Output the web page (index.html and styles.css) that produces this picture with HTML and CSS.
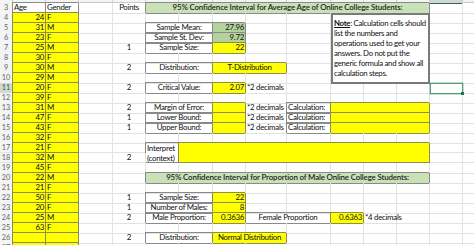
FILE: index.html
```html
<!DOCTYPE html>
<html>
<head>
<meta charset="utf-8">
<link rel="stylesheet" href="styles.css">
</head>
<body>
<div class="sheet">
  <div class="r hdr">
    <div class="corner"></div><div class="ch">A</div><div class="ch">B</div><div class="ch">C</div><div class="ch">D</div><div class="ch">E</div><div class="ch">F</div><div class="ch">G</div><div class="ch">H</div><div class="ch">I</div><div class="ch">J</div><div class="ch">K</div><div class="ch">L</div><div class="ch sel">M</div><div class="ch">N</div>
  </div>

  <div class="r"><div class="rn">3</div><div class="c b l">Age</div><div class="c b l">Gender</div><div class="c"></div><div class="c ct">Points</div><div class="c b h sp8">95% Confidence Interval for Average Age of Online College Students:</div><div class="c"></div><div class="c"></div></div>

  <div class="r"><div class="rn">4</div><div class="c b y rt">24</div><div class="c b y l">F</div><div class="c"></div><div class="c"></div><div class="c"></div><div class="c"></div><div class="c"></div><div class="c"></div><div class="c"></div><div class="c"></div><div class="c"></div><div class="c"></div><div class="c"></div><div class="c"></div></div>

  <div class="r"><div class="rn">5</div><div class="c b y rt">31</div><div class="c b y l">M</div><div class="c"></div><div class="c"></div><div class="c b ct sp2">Sample Mean:</div><div class="c b g rt">27.96</div><div class="c"></div><div class="c"></div><div class="c"></div><div class="c"></div><div class="c"></div><div class="c"></div><div class="c"></div></div>

  <div class="r"><div class="rn">6</div><div class="c b y rt">23</div><div class="c b y l">F</div><div class="c"></div><div class="c"></div><div class="c b ct sp2">Sample St. Dev:</div><div class="c b g rt">9.72</div><div class="c"></div><div class="c"></div><div class="c"></div><div class="c"></div><div class="c"></div><div class="c"></div><div class="c"></div></div>

  <div class="r"><div class="rn">7</div><div class="c b y rt">25</div><div class="c b y l">M</div><div class="c"></div><div class="c ct">1</div><div class="c b ct sp2">Sample Size:</div><div class="c b y rt">22</div><div class="c"></div><div class="c"></div><div class="c"></div><div class="c"></div><div class="c"></div><div class="c"></div><div class="c"></div></div>

  <div class="r"><div class="rn">8</div><div class="c b y rt">30</div><div class="c b y l">F</div><div class="c"></div><div class="c"></div><div class="c"></div><div class="c"></div><div class="c"></div><div class="c"></div><div class="c"></div><div class="c"></div><div class="c"></div><div class="c"></div><div class="c"></div><div class="c"></div></div>

  <div class="r"><div class="rn">9</div><div class="c b y rt">30</div><div class="c b y l">M</div><div class="c"></div><div class="c ct">2</div><div class="c b ct sp2">Distribution:</div><div class="c b y ct sp2">T-Distribution</div><div class="c"></div><div class="c"></div><div class="c"></div><div class="c"></div><div class="c"></div><div class="c"></div></div>

  <div class="r"><div class="rn">10</div><div class="c b y rt">29</div><div class="c b y l">M</div><div class="c"></div><div class="c"></div><div class="c"></div><div class="c"></div><div class="c"></div><div class="c"></div><div class="c"></div><div class="c"></div><div class="c"></div><div class="c"></div><div class="c"></div><div class="c"></div></div>

  <div class="r"><div class="rn act">11</div><div class="c b y rt">20</div><div class="c b y l">F</div><div class="c"></div><div class="c ct">2</div><div class="c b ct sp2">Critical Value:</div><div class="c b y rt">2.07</div><div class="c l">*2 decimals</div><div class="c"></div><div class="c"></div><div class="c"></div><div class="c"></div><div class="c active"></div><div class="c"></div></div>

  <div class="r"><div class="rn">12</div><div class="c b y rt">39</div><div class="c b y l">F</div><div class="c"></div><div class="c"></div><div class="c"></div><div class="c"></div><div class="c"></div><div class="c"></div><div class="c"></div><div class="c"></div><div class="c"></div><div class="c"></div><div class="c"></div><div class="c"></div></div>

  <div class="r"><div class="rn">13</div><div class="c b y rt">31</div><div class="c b y l">M</div><div class="c"></div><div class="c ct">2</div><div class="c b ct sp2">Margin of Error:</div><div class="c b y"></div><div class="c l">*2 decimals</div><div class="c b l">Calculation:</div><div class="c b y sp3"></div><div class="c"></div><div class="c"></div></div>

  <div class="r"><div class="rn">14</div><div class="c b y rt">47</div><div class="c b y l">F</div><div class="c"></div><div class="c ct">1</div><div class="c b ct sp2">Lower Bound:</div><div class="c b y"></div><div class="c l">*2 decimals</div><div class="c b l">Calculation:</div><div class="c b y sp3"></div><div class="c"></div><div class="c"></div></div>

  <div class="r"><div class="rn">15</div><div class="c b y rt">43</div><div class="c b y l">F</div><div class="c"></div><div class="c ct">1</div><div class="c b ct sp2">Upper Bound:</div><div class="c b y"></div><div class="c l">*2 decimals</div><div class="c b l">Calculation:</div><div class="c b y sp3"></div><div class="c"></div><div class="c"></div></div>

  <div class="r"><div class="rn">16</div><div class="c b y rt">32</div><div class="c b y l">F</div><div class="c"></div><div class="c"></div><div class="c"></div><div class="c"></div><div class="c"></div><div class="c"></div><div class="c"></div><div class="c"></div><div class="c"></div><div class="c"></div><div class="c"></div><div class="c"></div></div>

  <div class="r r2">
    <div class="rn">17</div><div class="c b y rt">21</div><div class="c b y l">F</div><div class="c"></div><div class="c"></div>
    <div class="c b l tall interp">Interpret<br>(context)</div>
    <div class="c b y tall sp7"></div>
    <div class="c"></div><div class="c"></div>
    <div class="rn">18</div><div class="c b y rt">32</div><div class="c b y l">M</div><div class="c"></div><div class="c ct">2</div>
    <div class="c"></div><div class="c"></div>
  </div>

  <div class="r"><div class="rn">19</div><div class="c b y rt">45</div><div class="c b y l">F</div><div class="c"></div><div class="c"></div><div class="c"></div><div class="c"></div><div class="c"></div><div class="c"></div><div class="c"></div><div class="c"></div><div class="c"></div><div class="c"></div><div class="c"></div><div class="c"></div></div>

  <div class="r"><div class="rn">20</div><div class="c b y rt">22</div><div class="c b y l">M</div><div class="c"></div><div class="c"></div><div class="c b h sp8">95% Confidence Interval for Proportion of Male Online College Students:</div><div class="c"></div><div class="c"></div></div>

  <div class="r"><div class="rn">21</div><div class="c b y rt">21</div><div class="c b y l">F</div><div class="c"></div><div class="c"></div><div class="c"></div><div class="c"></div><div class="c"></div><div class="c"></div><div class="c"></div><div class="c"></div><div class="c"></div><div class="c"></div><div class="c"></div><div class="c"></div></div>

  <div class="r"><div class="rn">22</div><div class="c b y rt">50</div><div class="c b y l">F</div><div class="c"></div><div class="c ct">1</div><div class="c b ct sp2">Sample Size:</div><div class="c b y rt">22</div><div class="c"></div><div class="c"></div><div class="c"></div><div class="c"></div><div class="c"></div><div class="c"></div><div class="c"></div></div>

  <div class="r"><div class="rn">23</div><div class="c b y rt">20</div><div class="c b y l">F</div><div class="c"></div><div class="c ct">1</div><div class="c b ct sp2">Number of Males:</div><div class="c b y rt">8</div><div class="c"></div><div class="c"></div><div class="c"></div><div class="c"></div><div class="c"></div><div class="c"></div><div class="c"></div></div>

  <div class="r"><div class="rn">24</div><div class="c b y rt">25</div><div class="c b y l">M</div><div class="c"></div><div class="c ct">2</div><div class="c b ct sp2">Male Proportion:</div><div class="c b y rt">0.3636</div><div class="c b ct sp2">Female Proportion</div><div class="c b y rt">0.6363</div><div class="c l">*4 decimals</div><div class="c"></div><div class="c"></div><div class="c"></div></div>

  <div class="r"><div class="rn">25</div><div class="c b y rt">63</div><div class="c b y l">F</div><div class="c"></div><div class="c"></div><div class="c"></div><div class="c"></div><div class="c"></div><div class="c"></div><div class="c"></div><div class="c"></div><div class="c"></div><div class="c"></div><div class="c"></div><div class="c"></div></div>

  <div class="r"><div class="rn">26</div><div class="c b y"></div><div class="c b y"></div><div class="c"></div><div class="c ct">2</div><div class="c b ct sp2">Distribution:</div><div class="c b y ct sp2">Normal Distribution</div><div class="c"></div><div class="c"></div><div class="c"></div><div class="c"></div><div class="c"></div><div class="c"></div></div>

  <div class="r"><div class="rn">27</div><div class="c b y"></div><div class="c b y"></div><div class="c"></div><div class="c"></div><div class="c"></div><div class="c"></div><div class="c"></div><div class="c"></div><div class="c"></div><div class="c"></div><div class="c"></div><div class="c"></div><div class="c"></div><div class="c"></div></div>

  <div class="note"><span class="nb">Note</span>: Calculation cells should<br>list the numbers and<br>operations used to get your<br>answers. Do not put the<br>generic formula and show all<br>calculation steps.</div>
</div>
</body>
</html>
```

FILE: styles.css
```css
* { box-sizing: border-box; }
html, body {
  margin: 0;
  padding: 0;
  background: #ffffff;
  overflow: hidden;
}
body {
  width: 474px;
  height: 245px;
}
.sheet {
  position: relative;
  width: 520px;
  font-family: Lato, "Noto Sans", sans-serif;
  font-size: 7.9px;
  letter-spacing: -0.3px;
  color: #111;
}
.r {
  display: grid;
  grid-template-columns: 13px 33px 33px 34px 33px 33px 34px 33px 41px 44px 33px 33px 33px 33px 33px;
  height: 10px;
}
.r2 {
  grid-template-rows: 10px 10px;
  height: 20px;
}
.hdr {
  height: 13px;
  margin-top: -10px;
  background: #f4f4f4;
  border-bottom: 1px solid #c8c8c8;
}
.corner { background: #f4f4f4; border-right: 1px solid #c8c8c8; }
.ch {
  text-align: center;
  line-height: 13px;
  color: #666;
  font-size: 7.5px;
  letter-spacing: 0;
  border-right: 1px solid #d0d0d0;
}
.ch.sel {
  background: #d4d4d4;
  color: #217346;
  border-bottom: 1px solid #217346;
}
.rn {
  background: #f4f4f4;
  color: #666;
  font-size: 7.3px;
  letter-spacing: 0;
  line-height: 10px;
  text-align: center;
  border-right: 1px solid #c8c8c8;
  border-bottom: 1px solid #e4e4e4;
}
.rn.act {
  background: #d6d6d6;
  color: #217346;
}
.c {
  line-height: 9.5px;
  white-space: nowrap;
  border-right: 1px solid #e2e2e2;
  border-bottom: 1px solid #e2e2e2;
  padding: 0 1px;
}
.b {
  border-right-color: #8a8a8a;
  border-bottom-color: #8a8a8a;
  box-shadow: -1px -1px 0 0 #8a8a8a;
}
.y { background: #ffff00; }
.y.b {
  border-right-color: #8c8c55;
  border-bottom-color: #8c8c55;
  box-shadow: -1px -1px 0 0 #8c8c55;
}
.g { background: #b3d29d; }
.h {
  background: #c9e1b7;
  text-align: center;
  color: #1e1e1e;
  font-weight: 600;
  letter-spacing: -0.15px;
}
.l { text-align: left; }
.rt { text-align: right; }
.ct { text-align: center; }
.sp2 { grid-column: span 2; }
.sp3 { grid-column: span 3; }
.sp7 { grid-column: span 7; }
.sp8 { grid-column: span 8; }
.tall { grid-row: span 2; }
.interp { line-height: 10px; }
.active {
  position: relative;
  border: 1px solid #4f9c74;
  box-shadow: 0 0 0 0.5px #8cc2a4;
}
.active::after {
  content: "";
  position: absolute;
  right: -2px;
  bottom: -2px;
  width: 3px;
  height: 3px;
  background: #217346;
}
.note {
  position: absolute;
  left: 331px;
  top: 23px;
  width: 99px;
  height: 71px;
  background: #ffffff;
  border: 2px solid #7a7a7a;
  padding: 3px 0 0 1px;
  font-size: 7.8px;
  line-height: 10px;
  color: #111;
  white-space: nowrap;
  overflow: hidden;
}
.nb {
  font-weight: 700;
  text-decoration: underline;
}
```
